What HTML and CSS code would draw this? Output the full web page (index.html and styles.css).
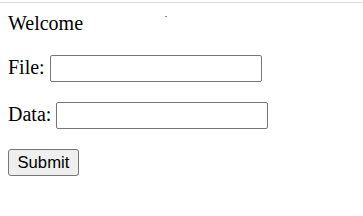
FILE: index.html
```html
<!DOCTYPE html>
<html lang="en">
    <head>
        <meta charset="UTF-8" />
        <title>Upload</title>
        <meta name="viewport" content="width=device-width, initial-scale=1.0" />
        <link rel="stylesheet" href="styles.css">
    </head>
    <body>
        <div class="top-rule"></div>
        <div class="page">
            <div class="welcome">Welcome<span class="dot"></span></div>

            <form class="upload-form">
                <p class="field">
                    <label for="file">File:</label>
                    <input type="text" id="file" name="file" />
                </p>
                <p class="field">
                    <label for="data">Data:</label>
                    <input type="text" id="data" name="data" />
                </p>
                <p class="field">
                    <button type="submit" class="btn">Submit</button>
                </p>
            </form>
        </div>
    </body>
</html>
```

FILE: styles.css
```css
* {
    box-sizing: border-box;
}

body {
    margin: 0;
    font-family: "Liberation Serif", "Times New Roman", serif;
    font-size: 20px;
    color: #000;
    background: #fff;
}

.top-rule {
    margin-top: 2px;
    border-top: 1px solid #dcdcdc;
}

.page {
    padding: 0 8px;
}

.welcome {
    margin-top: 9px;
    line-height: 23px;
}

.dot {
    display: inline-block;
    width: 2px;
    height: 1px;
    margin-left: 82px;
    vertical-align: 13px;
    background: #5b8fd6;
}

.upload-form {
    margin: 0;
}

.field {
    margin: 20px 0 0;
}

.field input {
    width: 212px;
    height: 27px;
    padding: 1px 3px;
    border: 1px solid #767676;
    border-radius: 2px;
    font-family: "Liberation Sans", Arial, sans-serif;
    font-size: 16.67px;
    vertical-align: baseline;
}

.btn {
    height: 27px;
    padding: 1px 8.5px;
    background: #efefef;
    color: #000;
    border: 1px solid #767676;
    border-radius: 3px;
    font-family: "Liberation Sans", Arial, sans-serif;
    font-size: 16.67px;
}
```
